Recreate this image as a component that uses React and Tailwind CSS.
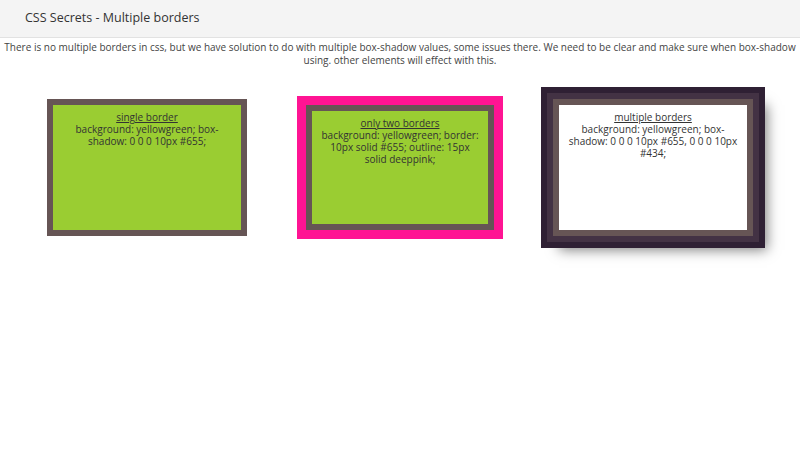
export default function App() {
  const font = { fontFamily: '"Open Sans", "Noto Sans", sans-serif' };
  return (
    <div className="w-[800px] h-[450px] bg-white overflow-hidden text-[#333]" style={font}>
      <header className="h-[38px] bg-[#f4f4f4] border-b border-[#e2e2e2] flex items-center pl-[25px]">
        <h1 className="text-[12.5px] text-[#333] font-normal">CSS Secrets - Multiple borders</h1>
      </header>
      <p className="text-[10px] leading-[13px] text-center text-[#444] mt-[3px] px-[4px]">
        There is no multiple borders in css, but we have solution to do with multiple box-shadow values, some issues there. We need to be clear and make sure when box-shadow using. other elements will effect with this.
      </p>
      <div className="flex justify-center gap-[65px] mt-[38px]">
        <div className="w-[188px] h-[125px] bg-[yellowgreen] shadow-[0_0_0_6px_#655] px-[8px] pt-[6px] text-center text-[10px] leading-[12px] text-[#333]">
          <span className="underline">single border</span>
          <br />
          background: yellowgreen; box-shadow: 0 0 0 10px #655;
        </div>
        <div className="w-[188px] h-[125px] bg-[yellowgreen] border-[6px] border-[#655] outline-[9px] outline-solid outline-[deeppink] px-[8px] pt-[6px] text-center text-[10px] leading-[12px] text-[#333]">
          <span className="underline">only two borders</span>
          <br />
          background: yellowgreen; border: 10px solid #655; outline: 15px solid deeppink;
        </div>
        <div className="w-[188px] h-[125px] bg-white shadow-[0_0_0_6px_#655,0_0_0_12px_#433244,0_0_0_18px_#2f2034,10px_10px_12px_10px_rgba(0,0,0,0.5)] px-[8px] pt-[6px] text-center text-[10px] leading-[12px] text-[#333]">
          <span className="underline">multiple borders</span>
          <br />
          background: yellowgreen; box-shadow: 0 0 0 10px #655, 0 0 0 10px #434;
        </div>
      </div>
    </div>
  );
}
